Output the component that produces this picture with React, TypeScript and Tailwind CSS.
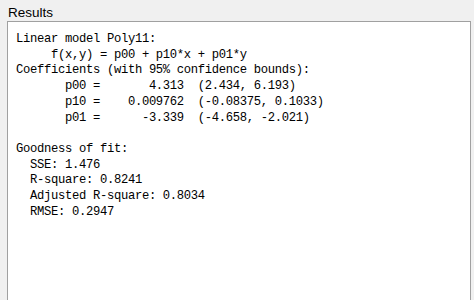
import React from "react";

const lines = [
  "Linear model Poly11:",
  "     f(x,y) = p00 + p10*x + p01*y",
  "Coefficients (with 95% confidence bounds):",
  "       p00 =       4.313  (2.434, 6.193)",
  "       p10 =    0.009762  (-0.08375, 0.1033)",
  "       p01 =      -3.339  (-4.658, -2.021)",
  "",
  "Goodness of fit:",
  "  SSE: 1.476",
  "  R-square: 0.8241",
  "  Adjusted R-square: 0.8034",
  "  RMSE: 0.2947",
];

export default function App() {
  return (
    <div className="flex h-[300px] w-[474px] flex-col overflow-hidden bg-[#f0f0f0]">
      <div className="h-[21px] pl-[8px] pt-[5px] font-['Liberation_Sans',Arial,sans-serif] text-[13.5px] leading-[15px] text-black">
        Results
      </div>
      <div className="ml-[7px] flex-1 w-[464px] border border-b-0 border-[#a0a0a0] bg-white pl-[8px] pt-[10px]">
        <pre className="font-['Liberation_Mono','Courier_New',monospace] text-[12.2px] leading-[15.7px] tracking-[-0.32px] text-black">
          {lines.join("\n")}
        </pre>
      </div>
    </div>
  );
}
